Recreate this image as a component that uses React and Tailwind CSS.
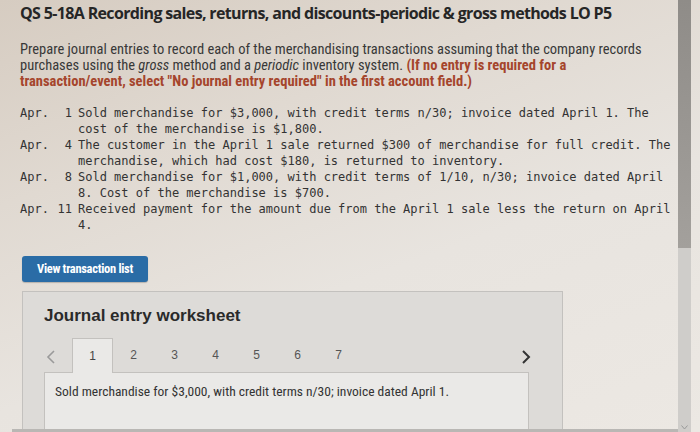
const tabs = ['1', '2', '3', '4', '5', '6', '7']

const entries = [
  { day: '1', text: 'Sold merchandise for $3,000, with credit terms n/30; invoice dated April 1. The cost of the merchandise is $1,800.' },
  { day: '4', text: 'The customer in the April 1 sale returned $300 of merchandise for full credit. The merchandise, which had cost $180, is returned to inventory.' },
  { day: '8', text: 'Sold merchandise for $1,000, with credit terms of 1/10, n/30; invoice dated April 8. Cost of the merchandise is $700.' },
  { day: '11', text: 'Received payment for the amount due from the April 1 sale less the return on April 4.' },
]

export default function App() {
  return (
    <div className="w-[700px] h-[432px] overflow-hidden flex bg-[linear-gradient(160deg,#d6ccc1_0%,#e0d9d1_30%,#e8e4df_60%,#ece8e3_100%)] text-[#2b2b2b]">
      {/* page */}
      <div className="flex-1 flex flex-col min-w-0">
        <div className="flex-1 overflow-hidden pl-5 pt-[2px]">
          <h1 className="font-['Open_Sans',sans-serif] font-bold text-[16px] leading-[22px] tracking-[-0.65px] text-[#262626] whitespace-nowrap">
            QS 5-18A Recording sales, returns, and discounts-periodic &amp; gross methods LO P5
          </h1>

          <p className="mt-[18px] w-[650px] font-['Roboto_Condensed','Liberation_Sans_Narrow','Liberation_Sans',sans-serif] text-[14.5px] leading-[16px] text-[#383838]">
            Prepare journal entries to record each of the merchandising transactions assuming that the company records purchases using the <i>gross</i> method and a <i>periodic</i> inventory system.{' '}
            <b className="text-[#a5452c]">(If no entry is required for a<br />transaction/event, select "No journal entry required" in the first account field.)</b>
          </p>

          <div className="mt-[15px] w-[660px] font-['DejaVu_Sans_Mono',monospace] text-[12px] leading-[16px] text-[#333]">
            {entries.map((e) => (
              <div key={e.day} className="flex">
                <span className="w-[36px] shrink-0">Apr.</span>
                <span className="w-[16px] shrink-0 text-right">{e.day}</span>
                <span className="pl-[6px] flex-1">{e.text}</span>
              </div>
            ))}
          </div>

          <button className="mt-[23px] ml-[2px] h-[26px] w-[126px] rounded-[3px] bg-[#2a6ca6] text-white font-['Roboto_Condensed','Liberation_Sans_Narrow','Liberation_Sans',sans-serif] font-bold text-[12.5px] tracking-[-0.3px] shadow-[0_1px_1px_rgba(0,0,0,0.2)]">
            View transaction list
          </button>

          {/* worksheet */}
          <div className="mt-[9px] ml-[2px] w-[541px] border border-[#c3c1be] bg-[#dddbd8] pl-[21px] pt-[14px] h-[200px]">
            <h2 className="font-['Liberation_Sans',sans-serif] font-bold text-[17px] leading-[20px] text-[#2a2a2a]">
              Journal entry worksheet
            </h2>

            <div className="mt-[11px] flex items-end w-[485px] h-[35px]">
              <span className="w-[28px] h-[30px] flex items-center pl-[2px] text-[#9a9a9a]">
                <svg width="10" height="14" viewBox="0 0 10 14" fill="none" stroke="currentColor" strokeWidth="1.6">
                  <path d="M8 1 L2 7 L8 13" />
                </svg>
              </span>
              {tabs.map((t, i) => (
                <div
                  key={t}
                  className={
                    i === 0
                      ? 'w-[41px] h-[35px] -mb-px relative z-10 flex items-center justify-center border border-b-0 border-[#c3c1be] bg-[#eae9e7] font-["Liberation_Sans",sans-serif] text-[12px] text-[#444]'
                      : 'w-[41px] h-[35px] flex items-center justify-center font-["Liberation_Sans",sans-serif] text-[12px] text-[#555]'
                  }
                >
                  {t}
                </div>
              ))}
              <span className="ml-auto w-[12px] h-[30px] flex items-center text-[#333] mr-[-4px]">
                <svg width="10" height="14" viewBox="0 0 10 14" fill="none" stroke="currentColor" strokeWidth="2">
                  <path d="M2 1 L8 7 L2 13" />
                </svg>
              </span>
            </div>

            <div className="w-[485px] h-[120px] border border-[#c3c1be] bg-[#eae9e7] pl-[10px] pt-[10px] font-['Roboto_Condensed','Liberation_Sans_Narrow','Liberation_Sans',sans-serif] text-[13.5px] leading-[16px] text-[#333]">
              Sold merchandise for $3,000, with credit terms n/30; invoice dated April 1.
            </div>
          </div>
        </div>
        {/* horizontal scrollbar */}
        <div className="h-[3px] ml-[12px] bg-[#b9b7b4]" />
      </div>

      {/* vertical scrollbar */}
      <div className="w-[13px] flex flex-col bg-[#cfcdca] mr-[9px] -ml-[4px]">
        <div className="h-[248px] bg-[linear-gradient(180deg,#8f8c88,#a3a09c)]" />
        <div className="flex-1" />
        <div className="h-[10px] flex items-center justify-center text-[#999]">
          <svg width="7" height="5" viewBox="0 0 7 5" fill="none" stroke="currentColor" strokeWidth="1">
            <path d="M0.5 0.5 L3.5 4 L6.5 0.5" />
          </svg>
        </div>
      </div>
    </div>
  )
}
